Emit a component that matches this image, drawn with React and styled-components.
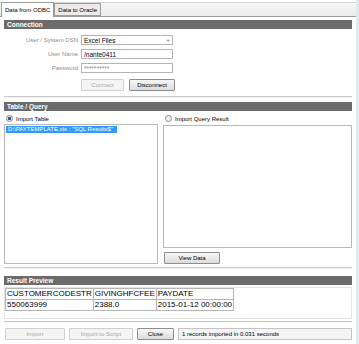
import React from 'react';
import styled, { createGlobalStyle } from 'styled-components';

const GlobalStyle = createGlobalStyle`
  html, body {
    margin: 0;
    padding: 0;
    background: #dfe9f4;
  }
  body {
    font-family: "Liberation Sans", Arial, sans-serif;
    font-size: 6px;
    color: #000;
  }
`;

const Window = styled.div`
  width: 356px;
  height: 344px;
  background: #ffffff;
  display: flex;
  flex-direction: column;
  overflow: hidden;
`;

const TabStrip = styled.div`
  height: 13px;
  margin-top: 2px;
  background: linear-gradient(#f7f7f7, #ececec);
  border-top: 1px solid #d4d4d4;
  border-bottom: 1px solid #9c9c9c;
  display: flex;
  align-items: flex-end;
  padding-left: 1px;
`;

const Tab = styled.div`
  height: ${p => (p.$active ? '14px' : '11px')};
  margin-bottom: ${p => (p.$active ? '-1px' : '0')};
  padding: 0 3px;
  display: flex;
  align-items: center;
  background: ${p => (p.$active ? '#ffffff' : '#ebebeb')};
  border: 1px solid #9c9c9c;
  border-bottom: ${p => (p.$active ? 'none' : '1px solid #9c9c9c')};
  font-size: 6px;
  white-space: nowrap;
`;

const Page = styled.div`
  flex: 1;
  display: flex;
  flex-direction: column;
  padding: 3px 4px 0 4px;
`;

const SectionHeader = styled.div`
  height: 9px;
  background: #6b6b6b;
  color: #ffffff;
  font-weight: bold;
  font-size: 6.5px;
  line-height: 9px;
  padding-left: 3px;
  margin-top: ${p => p.$top || 0}px;
`;

const Separator = styled.div`
  height: 1px;
  background: #c8c8c8;
  border-bottom: 1px solid #f4f4f4;
  margin-top: ${p => p.$top || 0}px;
`;

const Form = styled.div`
  display: grid;
  grid-template-columns: 74px 92px;
  column-gap: 3px;
  row-gap: 4px;
  margin-top: 6px;
  align-items: center;
`;

const Label = styled.span`
  text-align: right;
  color: #8c8c8c;
  font-size: 6px;
  white-space: nowrap;
`;

const Field = styled.div`
  height: 8px;
  border: 1px solid #b4b4b4;
  background: #ffffff;
  display: flex;
  align-items: center;
  justify-content: space-between;
  padding: 0 2px;
  font-size: 6.5px;
  color: ${p => (p.$muted ? '#8c8c8c' : '#000')};
`;

const Arrow = styled.span`
  font-size: 4px;
  color: #7a7a7a;
`;

const ButtonRow = styled.div`
  display: flex;
  gap: ${p => p.$gap || 5}px;
  margin-left: ${p => p.$left || 0}px;
  margin-top: ${p => p.$top || 0}px;
`;

const Button = styled.div`
  width: ${p => p.$w}px;
  height: 10px;
  border: 1px solid ${p => (p.$disabled ? '#cfcfcf' : '#8e8e8e')};
  background: ${p => (p.$disabled ? '#f4f4f4' : 'linear-gradient(#f6f6f6, #dcdcdc)')};
  color: ${p => (p.$disabled ? '#a8a8a8' : '#000')};
  border-radius: 1px;
  display: flex;
  align-items: center;
  justify-content: center;
  font-size: 6px;
  white-space: nowrap;
`;

const Columns = styled.div`
  display: flex;
  gap: 5px;
  margin-top: 3px;
`;

const Pane = styled.div`
  width: ${p => p.$w}px;
  display: flex;
  flex-direction: column;
`;

const RadioRow = styled.label`
  display: flex;
  align-items: center;
  gap: 3px;
  height: 9px;
  padding-left: 2px;
  font-size: 6px;
`;

const Radio = styled.span`
  width: 5px;
  height: 5px;
  border-radius: 50%;
  border: 1px solid #8a8a8a;
  background: ${p => (p.$on ? 'radial-gradient(#2a5fa8 45%, #e8e8e8 50%)' : '#f2f2f2')};
`;

const ListBox = styled.div`
  height: 136px;
  border: 1px solid #b8b8b8;
  background: #ffffff;
  padding: 1px;
  margin-top: 1px;
`;

const ListItem = styled.div`
  height: 7px;
  width: fit-content;
  padding: 0 4px 0 2px;
  background: #3399ff;
  color: #ffffff;
  font-size: 6px;
  line-height: 7px;
  white-space: nowrap;
`;

const QueryBox = styled.div`
  height: 121px;
  border: 1px solid #b8b8b8;
  background: #ffffff;
  margin-top: 2px;
`;

const Grid = styled.div`
  margin-top: 2px;
  height: 30px;
  background: #ffffff;
  border: 1px solid #e2e2e2;
`;

const GridTable = styled.table`
  border-collapse: collapse;
  font-size: 8px;
  font-family: "Liberation Sans", Arial, sans-serif;
`;

const Cell = styled.td`
  border: 1px solid #b5b5b5;
  padding: 0 1px;
  height: 10px;
  width: ${p => p.$w}px;
  white-space: nowrap;
  line-height: 10px;
`;

const Footer = styled.div`
  display: flex;
  align-items: center;
  gap: 4px;
  margin-top: 5px;
  padding-left: 1px;
`;

const Status = styled.div`
  flex: 1;
  height: 10px;
  border: 1px solid #c4c4c4;
  background: #f4f4f4;
  display: flex;
  align-items: center;
  padding-left: 3px;
  font-size: 6px;
  white-space: nowrap;
`;

export default function App() {
  return (
    <>
      <GlobalStyle />
      <Window>
        <TabStrip>
          <Tab $active>Data from ODBC</Tab>
          <Tab>Data to Oracle</Tab>
        </TabStrip>
        <Page>
          <SectionHeader>Connection</SectionHeader>
          <Form>
            <Label>User / System DSN</Label>
            <Field>
              Excel Files <Arrow>▼</Arrow>
            </Field>
            <Label>User Name</Label>
            <Field>/nante0411</Field>
            <Label>Password</Label>
            <Field $muted>**********</Field>
          </Form>
          <ButtonRow $left={77} $top={6}>
            <Button $w={41} $disabled>Connect</Button>
            <Button $w={44}>Disconnect</Button>
          </ButtonRow>
          <Separator $top={5} />

          <SectionHeader $top={4}>Table / Query</SectionHeader>
          <Columns>
            <Pane $w={154}>
              <RadioRow>
                <Radio $on />
                Import Table
              </RadioRow>
              <ListBox>
                <ListItem>D:\PAYTEMPLATE.xls : "SQL Results$"</ListItem>
              </ListBox>
            </Pane>
            <Pane $w={189}>
              <RadioRow>
                <Radio />
                Import Query Result
              </RadioRow>
              <QueryBox />
              <ButtonRow $left={1} $top={4}>
                <Button $w={54}>View Data</Button>
              </ButtonRow>
            </Pane>
          </Columns>
          <Separator $top={3} />

          <SectionHeader $top={7}>Result Preview</SectionHeader>
          <Grid>
            <GridTable>
              <tbody>
                <tr>
                  <Cell $w={81}>CUSTOMERCODESTR</Cell>
                  <Cell $w={56}>GIVINGHFCFEE</Cell>
                  <Cell $w={68}>PAYDATE</Cell>
                </tr>
                <tr>
                  <Cell>550063999</Cell>
                  <Cell>2388.0</Cell>
                  <Cell>2015-01-12 00:00:00</Cell>
                </tr>
              </tbody>
            </GridTable>
          </Grid>
          <Separator $top={2} />
          <Footer>
            <Button $w={58} $disabled>Import</Button>
            <Button $w={62} $disabled>Import to Script</Button>
            <Button $w={35}>Close</Button>
            <Status>1 records imported in 0.031 seconds</Status>
          </Footer>
        </Page>
      </Window>
    </>
  );
}
